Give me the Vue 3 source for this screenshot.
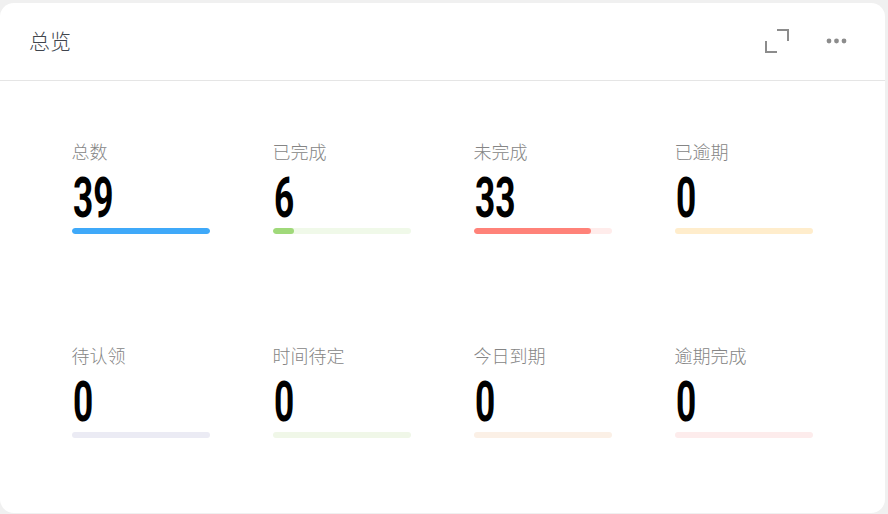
<script setup>
const stats = [
  { label: "总数", value: 39, pct: 100, color: "#3fa9f9", track: "#e3f2fe" },
  { label: "已完成", value: 6, pct: 15, color: "#a0d97a", track: "#f0f9e9" },
  { label: "未完成", value: 33, pct: 85, color: "#ff8279", track: "#ffeceb" },
  { label: "已逾期", value: 0, pct: 0, color: "#ffb84d", track: "#ffedcc" },
  { label: "待认领", value: 0, pct: 0, color: "#8a8ac0", track: "#ebebf4" },
  { label: "时间待定", value: 0, pct: 0, color: "#a0d97a", track: "#f0f7e8" },
  { label: "今日到期", value: 0, pct: 0, color: "#f5b98a", track: "#fbf0e6" },
  { label: "逾期完成", value: 0, pct: 0, color: "#ff8279", track: "#fdecec" },
];
</script>

<template>
  <div class="page">
    <div class="card">
      <div class="head">
        <span class="title">总览</span>
        <div class="tools">
          <svg class="expand" width="26" height="26" viewBox="0 0 26 26" fill="none" stroke="#8c8c8c" stroke-width="2">
            <path d="M13 2H24V13" />
            <path d="M2 13V24H13" />
          </svg>
          <svg class="more" width="22" height="6" viewBox="0 0 22 6" fill="#8c8c8c">
            <circle cx="3" cy="3" r="2.4" />
            <circle cx="10.5" cy="3" r="2.4" />
            <circle cx="18" cy="3" r="2.4" />
          </svg>
        </div>
      </div>
      <div class="grid">
        <div class="stat" v-for="s in stats" :key="s.label">
          <div class="label">{{ s.label }}</div>
          <div class="num"><span>{{ s.value }}</span></div>
          <div class="track" :style="{ background: s.track }">
            <div class="fill" :style="{ width: s.pct + '%', background: s.color }"></div>
          </div>
        </div>
      </div>
    </div>
  </div>
</template>

<style>
html, body {
  margin: 0;
  background: #f0f0f0;
}
</style>

<style scoped>
.page {
  width: 888px;
  height: 514px;
  padding: 3px 3px 1px 0;
  box-sizing: border-box;
  overflow: hidden;
  font-family: "Noto Sans CJK SC", "Liberation Sans", sans-serif;
}
.card {
  height: 100%;
  background: #fff;
  border-radius: 14px;
}
.head {
  height: 75px;
  padding: 0 37px 2px 30px;
  border-bottom: 1px solid #e5e5e5;
  display: flex;
  align-items: center;
  justify-content: space-between;
}
.title {
  margin: -2px 0 0 -1px;
  font-size: 21px;
  font-weight: 300;
  color: #40454d;
}
.tools {
  display: flex;
  align-items: center;
  gap: 36px;
}
.grid {
  display: grid;
  grid-template-columns: repeat(4, 138px);
  column-gap: 63px;
  row-gap: 109px;
  padding: 58px 0 0 72px;
}
.label {
  margin: 0 0 2px -0.5px;
  font-size: 18px;
  font-weight: 300;
  line-height: 24px;
  color: #858585;
}
.num {
  height: 63px;
  padding-left: 1px;
  line-height: 66px;
  font-family: Roboto, sans-serif;
  font-weight: 700;
  font-size: 56px;
  color: #000;
}
.num span {
  display: inline-block;
  transform: scaleX(0.63);
  transform-origin: left center;
}
.track {
  height: 6px;
  border-radius: 3px;
  overflow: hidden;
}
.fill {
  height: 100%;
  border-radius: 3px;
}
</style>
